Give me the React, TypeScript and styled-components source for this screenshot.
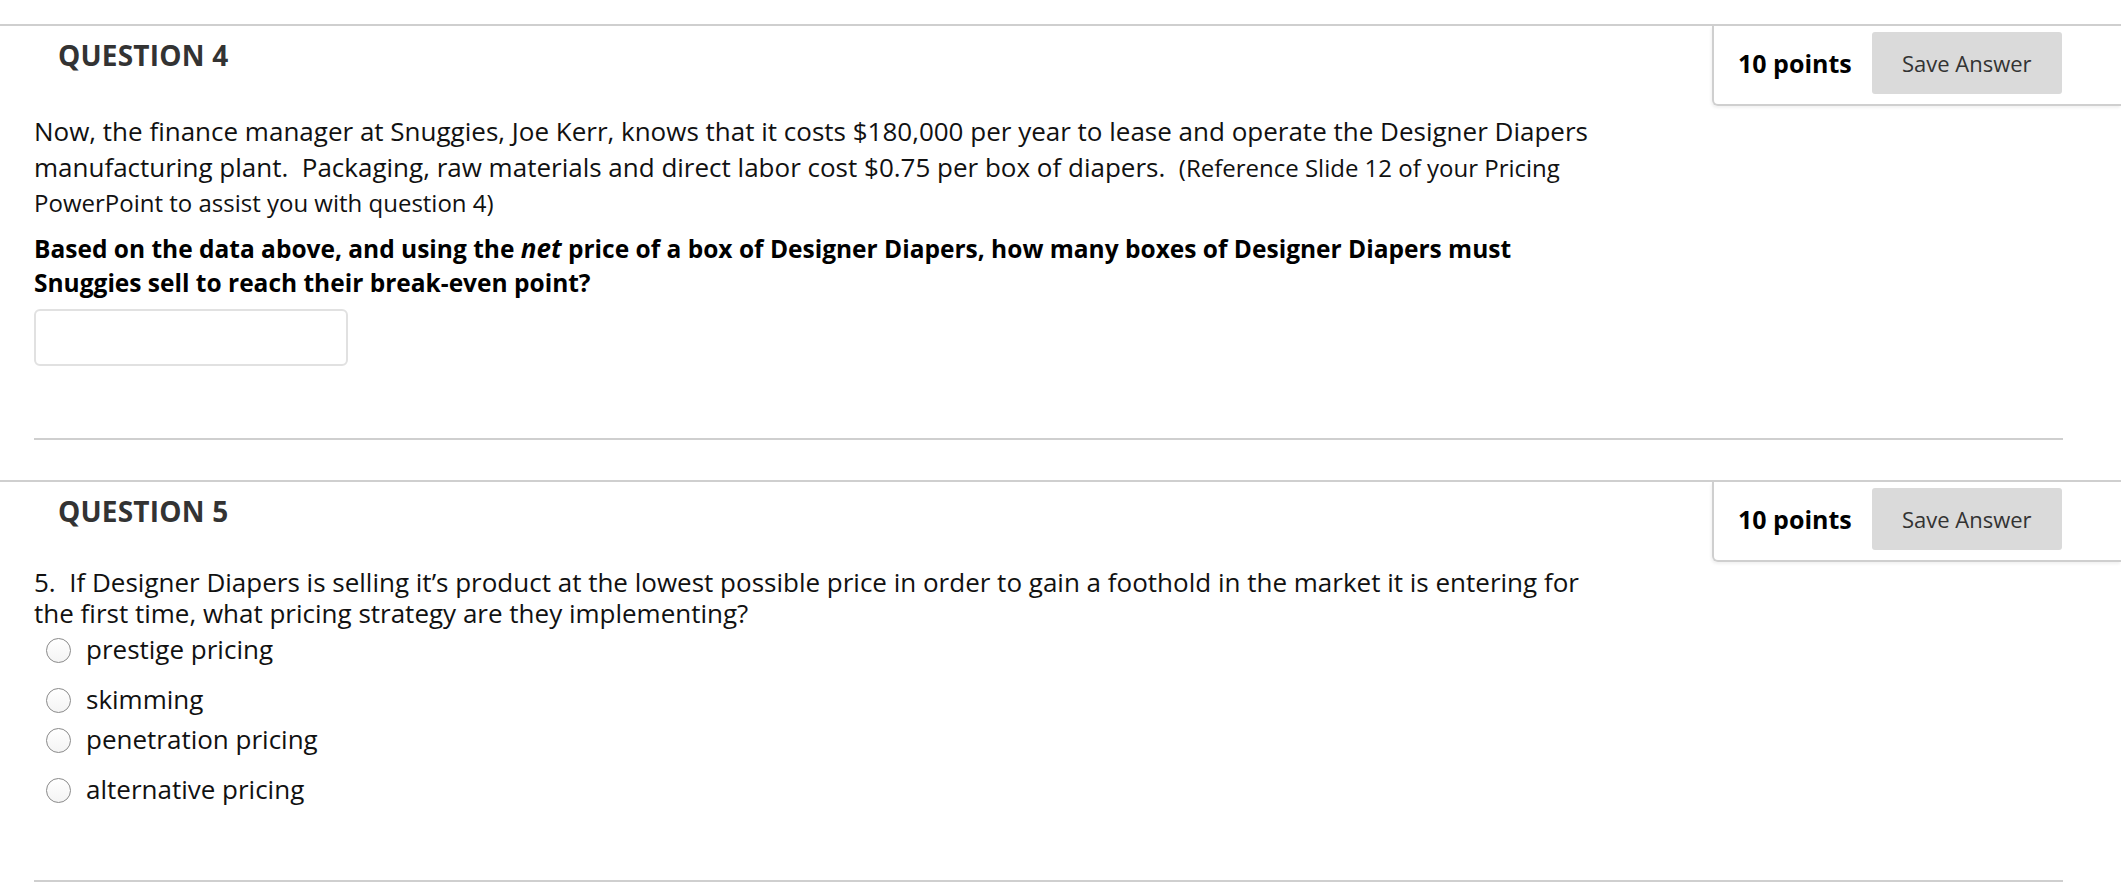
import React from "react";
import styled, { createGlobalStyle } from "styled-components";

const GlobalStyle = createGlobalStyle`
  html, body {
    margin: 0;
    padding: 0;
    background: #ffffff;
  }
  body {
    font-family: "Open Sans", "Liberation Sans", Arial, sans-serif;
    color: #111111;
  }
`;

const Page = styled.div`
  padding-top: 24px;
`;

const Block = styled.section<{ $gap?: number }>`
  margin-top: ${(p) => p.$gap ?? 0}px;
  border-top: 2px solid #cfcfcf;
`;

const Header = styled.div`
  display: flex;
  justify-content: space-between;
  align-items: flex-start;
`;

const Title = styled.h2`
  margin: 0;
  padding: 10px 0 0 58px;
  font-size: 28px;
  line-height: 38px;
  font-weight: 700;
  color: #333333;
  letter-spacing: 0.2px;
`;

const PointsPanel = styled.div`
  width: 409px;
  height: 80px;
  box-sizing: border-box;
  display: flex;
  align-items: center;
  gap: 20px;
  padding: 0 58px 4px 24px;
  border-left: 2px solid #cfcfcf;
  border-bottom: 2px solid #cfcfcf;
  border-bottom-left-radius: 6px;
  box-shadow: -1px 2px 3px rgba(0, 0, 0, 0.06);
`;

const Points = styled.span`
  font-size: 25px;
  font-weight: 700;
  color: #000000;
  white-space: nowrap;
`;

const SaveButton = styled.button`
  width: 190px;
  height: 62px;
  flex: none;
  border: none;
  border-radius: 3px;
  background: #dadada;
  color: #333333;
  font-family: "Open Sans", "Liberation Sans", Arial, sans-serif;
  font-size: 22px;
  cursor: pointer;
`;

const Body = styled.div`
  padding: 0 58px 0 34px;
`;

const Prompt = styled.p<{ $lh: number; $top: number }>`
  margin: ${(p) => p.$top}px 0 0;
  font-size: 26px;
  line-height: ${(p) => p.$lh}px;
  color: #111111;
`;

const Note = styled.span`
  font-size: 24px;
  line-height: 1;
`;

const Ask = styled.p`
  margin: 11px 0 0;
  font-size: 24.5px;
  line-height: 34px;
  font-weight: 700;
  color: #000000;
`;

const Em = styled.em`
  font-size: 26px;
  line-height: 1;
`;

const AnswerInput = styled.input`
  display: block;
  margin-top: 9px;
  width: 314px;
  height: 57px;
  box-sizing: border-box;
  border: 2px solid #e1e1e1;
  border-radius: 6px;
  font-size: 22px;
  padding: 0 10px;
  outline: none;
`;

const Divider = styled.hr<{ $top: number }>`
  margin: ${(p) => p.$top}px 0 0;
  border: none;
  border-top: 2px solid #cfcfcf;
  height: 0;
`;

const Options = styled.div`
  display: flex;
  flex-direction: column;
  padding-left: 12px;
`;

const Option = styled.label<{ $space?: number }>`
  display: flex;
  align-items: flex-start;
  gap: 15px;
  height: 40px;
  margin-top: ${(p) => p.$space ?? 0}px;
  font-size: 26px;
  line-height: 40px;
  color: #111111;
  cursor: pointer;
`;

const Radio = styled.input`
  appearance: none;
  margin: 9px 0 0;
  width: 25px;
  height: 25px;
  flex: none;
  border: 1.5px solid #8a8a8a;
  border-radius: 50%;
  background: linear-gradient(#ffffff, #f4f4f4);
  box-sizing: border-box;
  &:checked {
    background: radial-gradient(#333 0 35%, #fff 40%);
  }
`;

const choices = [
  { label: "prestige pricing", space: 0 },
  { label: "skimming", space: 10 },
  { label: "penetration pricing", space: 0 },
  { label: "alternative pricing", space: 10 },
];

function QuestionHeader({ num }: { num: number }) {
  return (
    <Header>
      <Title>QUESTION {num}</Title>
      <PointsPanel>
        <Points>10 points</Points>
        <SaveButton type="button">Save Answer</SaveButton>
      </PointsPanel>
    </Header>
  );
}

export default function App() {
  return (
    <Page>
      <GlobalStyle />
      <Block>
        <QuestionHeader num={4} />
        <Body>
          <Prompt $lh={35.5} $top={8}>
            Now, the finance manager at Snuggies, Joe Kerr, knows that it costs
            $180,000 per year to lease and operate the Designer Diapers
            <br />
            manufacturing plant.{"\u00a0 "}Packaging, raw materials and direct
            labor cost $0.75 per box of diapers.{"\u00a0 "}
            <Note>
              (Reference Slide 12 of your Pricing
              <br />
              PowerPoint to assist you with question 4)
            </Note>
          </Prompt>
          <Ask>
            Based on the data above, and using the <Em>net</Em> price of a box
            of Designer Diapers, how many boxes of Designer Diapers must
            <br />
            Snuggies sell to reach their break-even point?
          </Ask>
          <AnswerInput type="text" aria-label="Answer" />
          <Divider $top={72} />
        </Body>
      </Block>
      <Block $gap={40}>
        <QuestionHeader num={5} />
        <Body>
          <Prompt $lh={31} $top={5}>
            5.{"\u00a0 "}If Designer Diapers is selling it’s product at the
            lowest possible price in order to gain a foothold in the market it
            is entering for
            <br />
            the first time, what pricing strategy are they implementing?
          </Prompt>
          <Options>
            {choices.map((c) => (
              <Option key={c.label} $space={c.space}>
                <Radio type="radio" name="q5" />
                {c.label}
              </Option>
            ))}
          </Options>
          <Divider $top={71} />
        </Body>
      </Block>
    </Page>
  );
}
